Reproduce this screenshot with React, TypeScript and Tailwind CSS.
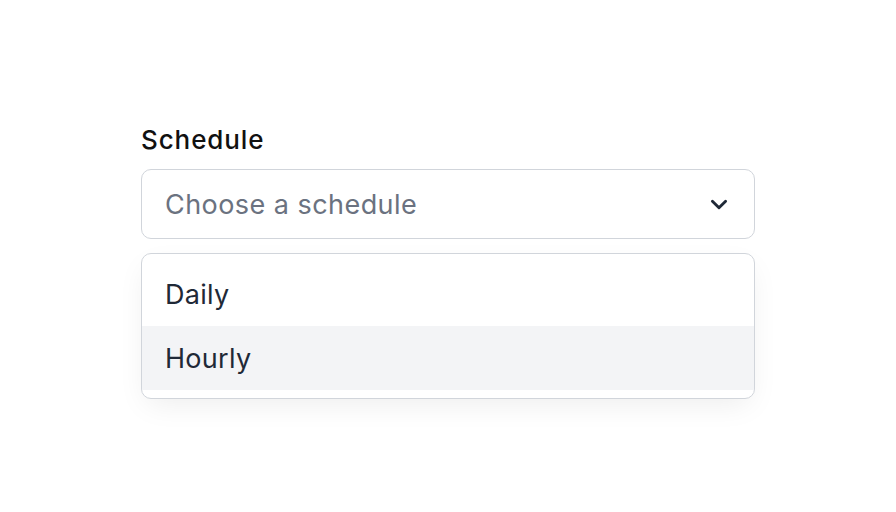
import React from "react";

export default function App() {
  return (
    <div
      className="min-h-screen w-full bg-white pt-[124px]"
      style={{ fontFamily: "Inter, 'Noto Sans', sans-serif" }}
    >
      <div className="mx-auto flex w-[614px] flex-col">
        <label className="text-[26px] leading-[32px] font-medium tracking-[0.9px] text-[#111111]">Schedule</label>
        <button className="mt-[13px] flex h-[70px] w-full items-center justify-between rounded-[10px] border border-[#d1d5db] bg-white pl-[23px] pr-[24px] text-left">
          <span className="block pt-[3px] text-[27px] tracking-[0.45px] text-[#6b7280]">Choose a schedule</span>
          <svg width="22" height="22" viewBox="0 0 20 20" fill="none" className="text-[#1f2937]">
            <path d="M4 7.5l6 6 6-6" stroke="currentColor" strokeWidth="2.6" strokeLinecap="round" strokeLinejoin="round" />
          </svg>
        </button>
        <ul className="mt-[14px] w-full rounded-[10px] border border-[#d1d5db] bg-white py-[8px] shadow-[0_10px_30px_-6px_rgba(0,0,0,0.08)]">
          <li className="flex h-[64px] items-center pl-[23px] pt-[2px] text-[27px] tracking-[0.3px] text-[#1f2937]">Daily</li>
          <li className="flex h-[64px] items-center bg-[#f3f4f6] pl-[23px] pt-[2px] text-[27px] tracking-[0.3px] text-[#1f2937]">Hourly</li>
        </ul>
      </div>
    </div>
  );
}
